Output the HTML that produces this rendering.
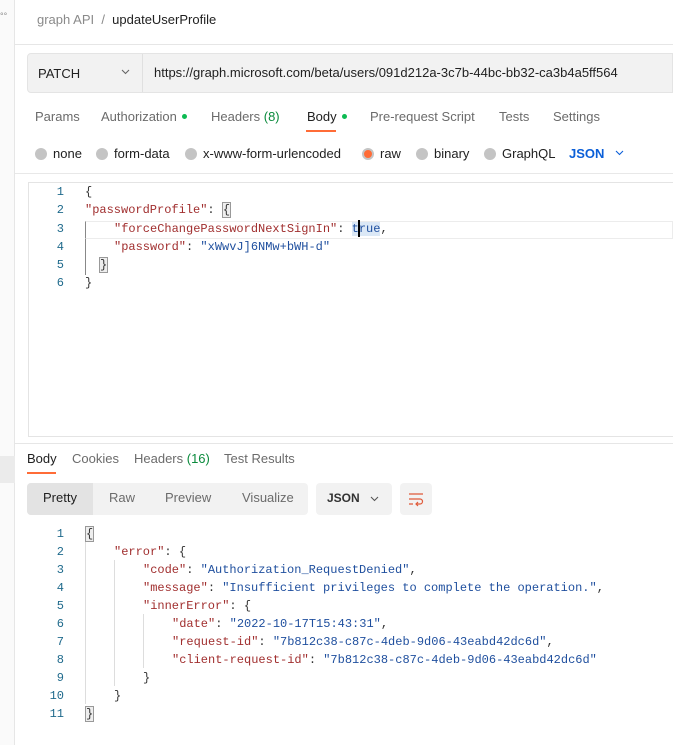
<!DOCTYPE html>
<html><head><meta charset="utf-8"><style>
*{margin:0;padding:0;box-sizing:border-box}
body{width:673px;height:745px;overflow:hidden;background:#fff;font-family:"Liberation Sans",Arial,sans-serif;font-size:13px;color:#6b6b6b;position:relative}
.a{position:absolute;white-space:nowrap}
.side{left:0;top:0;width:15px;height:745px;background:#fafafa;border-right:1px solid #e6e6e6}
.mono{font-family:"Liberation Mono",monospace;font-size:12px}
.ln{color:#1f6a8c;text-align:right;width:30px}
.k{color:#a12f2f}.s{color:#1f4f9e}.p{color:#333}
.dot{display:inline-block;width:5px;height:5px;border-radius:50%;background:#0cbb52;margin-left:5px;vertical-align:2px}
.rad{display:inline-block;width:12px;height:12px;border-radius:50%;background:#c4c4c4;margin-right:6px;vertical-align:-2px}
</style></head><body>
<div class="a side"></div>
<div class="a" style="left:0;top:456px;width:15px;height:27px;background:#ebebeb"></div>
<div class="a" style="left:0;top:11px;font-size:9px;color:#888">°°</div>
<div class="a" style="left:37px;top:12px;font-size:13px;color:#8a8a8a">graph API &nbsp;/&nbsp; <span style="color:#212121">updateUserProfile</span></div>
<div class="a" style="left:15px;top:44px;width:658px;height:1px;background:#e6e6e6"></div>
<div class="a" style="left:27px;top:53px;width:646px;height:40px;background:#f2f2f2;border:1px solid #e4e4e4;border-radius:4px 0 0 4px"></div>
<div class="a" style="left:142px;top:54px;width:1px;height:38px;background:#e0e0e0"></div>
<div class="a" style="left:38px;top:66px;color:#212121;font-size:13px">PATCH</div>
<svg class="a" style="left:121px;top:69px" width="9" height="6" viewBox="0 0 9 6" fill="none" stroke="#666" stroke-width="1.1"><path d="M1 1l3.5 3.5L8 1"/></svg>
<div class="a" style="left:154px;top:65px;color:#212121;font-size:13px">https://graph.microsoft.com/beta/users/091d212a-3c7b-44bc-bb32-ca3b4a5ff564</div>
<div class="a" style="left:35px;top:109px">Params</div>
<div class="a" style="left:101px;top:109px">Authorization<span class="dot"></span></div>
<div class="a" style="left:211px;top:109px">Headers <span style="color:#0a8a3c">(8)</span></div>
<div class="a" style="left:307px;top:109px;color:#212121">Body<span class="dot"></span></div>
<div class="a" style="left:306px;top:130px;width:30px;height:2px;background:#ff6c37"></div>
<div class="a" style="left:370px;top:109px">Pre-request Script</div>
<div class="a" style="left:499px;top:109px">Tests</div>
<div class="a" style="left:553px;top:109px">Settings</div>
<div class="a" style="left:35px;top:146px;color:#212121"><span class="rad"></span>none</div>
<div class="a" style="left:96px;top:146px;color:#212121"><span class="rad"></span>form-data</div>
<div class="a" style="left:185px;top:146px;color:#212121"><span class="rad"></span>x-www-form-urlencoded</div>
<div class="a" style="left:362px;top:146px;color:#212121"><span class="rad" style="background:#ff6c37;border:2px solid #c4c4c4"></span>raw</div>
<div class="a" style="left:416px;top:146px;color:#212121"><span class="rad"></span>binary</div>
<div class="a" style="left:484px;top:146px;color:#212121"><span class="rad"></span>GraphQL</div>
<div class="a" style="left:569px;top:146px;color:#0b5fd8;font-weight:bold">JSON</div>
<svg class="a" style="left:615px;top:150px" width="9" height="6" viewBox="0 0 9 6" fill="none" stroke="#0b5fd8" stroke-width="1.1"><path d="M1 1l3.5 3.5L8 1"/></svg>
<div class="a" style="left:15px;top:173px;width:658px;height:1px;background:#e8e8e8"></div>
<div class="a" style="left:28px;top:182px;width:650px;height:255px;border:1px solid #e4e4e4"></div>
<div class="a mono" style="left:34px;top:183px;line-height:18.3px">
<div><span class="a ln" style="left:0">1</span><span style="margin-left:51px" class="p">{</span></div>
<div><span class="a ln" style="left:0">2</span><span style="margin-left:51px" class="k">"passwordProfile"</span><span class="p">: <span style="border:1px solid #999;background:#eee">{</span></span></div>
<div><span class="a ln" style="left:0">3</span><span style="margin-left:80px" class="k">"forceChangePasswordNextSignIn"</span><span class="p">: </span><span class="s" style="background:#dbe8f6">true</span><span class="p">,</span></div>
<div><span class="a ln" style="left:0">4</span><span style="margin-left:80px" class="k">"password"</span><span class="p">: </span><span class="s">"xWwvJ]6NMw+bWH-d"</span></div>
<div><span class="a ln" style="left:0">5</span><span style="margin-left:65px;border:1px solid #999;background:#eee" class="p">}</span></div>
<div><span class="a ln" style="left:0">6</span><span style="margin-left:51px" class="p">}</span></div>
</div>
<div class="a" style="left:85px;top:221px;width:588px;height:18px;border:1px solid #ececec;border-left:1px solid #888"></div>
<div class="a" style="left:85px;top:239px;width:1px;height:36px;background:#888"></div>
<div class="a" style="left:358px;top:220px;width:2px;height:17px;background:#000"></div>
<div class="a" style="left:15px;top:443px;width:658px;height:1px;background:#e6e6e6"></div>
<div class="a" style="left:27px;top:451px;color:#212121">Body</div>
<div class="a" style="left:27px;top:472px;width:29px;height:2px;background:#ff6c37"></div>
<div class="a" style="left:72px;top:451px">Cookies</div>
<div class="a" style="left:134px;top:451px">Headers <span style="color:#0a8a3c">(16)</span></div>
<div class="a" style="left:224px;top:451px">Test Results</div>
<div class="a" style="left:27px;top:483px;width:281px;height:32px;background:#f2f2f2;border-radius:4px"></div>
<div class="a" style="left:27px;top:483px;width:66px;height:32px;background:#e3e3e3;border-radius:4px 0 0 4px"></div>
<div class="a" style="left:43px;top:490px;color:#212121">Pretty</div>
<div class="a" style="left:109px;top:490px">Raw</div>
<div class="a" style="left:165px;top:490px">Preview</div>
<div class="a" style="left:242px;top:490px">Visualize</div>
<div class="a" style="left:316px;top:483px;width:76px;height:32px;background:#f2f2f2;border-radius:4px"></div>
<div class="a" style="left:327px;top:491px;color:#333;font-size:12px;font-weight:bold">JSON</div>
<svg class="a" style="left:370px;top:496px" width="9" height="6" viewBox="0 0 9 6" fill="none" stroke="#555" stroke-width="1.1"><path d="M1 1l3.5 3.5L8 1"/></svg>
<div class="a" style="left:400px;top:483px;width:32px;height:32px;background:#f2f2f2;border-radius:4px"></div>
<svg class="a" style="left:407px;top:490px" width="18" height="18" viewBox="0 0 18 18" fill="none" stroke="#e05a3a" stroke-width="1.2"><path d="M2 4h14M2 9h11a2.5 2.5 0 0 1 0 5H9M11 12l-2 2 2 2M2 14h4"/></svg>
<div class="a mono" style="left:34px;top:525px;line-height:18px">
<div><span class="a ln" style="left:0">1</span><span style="margin-left:51px;border:1px solid #999;background:#eee" class="p">{</span></div>
<div><span class="a ln" style="left:0">2</span><span style="margin-left:80px" class="k">"error"</span><span class="p">: {</span></div>
<div><span class="a ln" style="left:0">3</span><span style="margin-left:109px" class="k">"code"</span><span class="p">: </span><span class="s">"Authorization_RequestDenied"</span><span class="p">,</span></div>
<div><span class="a ln" style="left:0">4</span><span style="margin-left:109px" class="k">"message"</span><span class="p">: </span><span class="s">"Insufficient privileges to complete the operation."</span><span class="p">,</span></div>
<div><span class="a ln" style="left:0">5</span><span style="margin-left:109px" class="k">"innerError"</span><span class="p">: {</span></div>
<div><span class="a ln" style="left:0">6</span><span style="margin-left:138px" class="k">"date"</span><span class="p">: </span><span class="s">"2022-10-17T15:43:31"</span><span class="p">,</span></div>
<div><span class="a ln" style="left:0">7</span><span style="margin-left:138px" class="k">"request-id"</span><span class="p">: </span><span class="s">"7b812c38-c87c-4deb-9d06-43eabd42dc6d"</span><span class="p">,</span></div>
<div><span class="a ln" style="left:0">8</span><span style="margin-left:138px" class="k">"client-request-id"</span><span class="p">: </span><span class="s">"7b812c38-c87c-4deb-9d06-43eabd42dc6d"</span></div>
<div><span class="a ln" style="left:0">9</span><span style="margin-left:109px" class="p">}</span></div>
<div><span class="a ln" style="left:0">10</span><span style="margin-left:80px" class="p">}</span></div>
<div><span class="a ln" style="left:0">11</span><span style="margin-left:51px;border:1px solid #999;background:#eee" class="p">}</span></div>
</div>
<div class="a" style="left:85px;top:542px;width:1px;height:162px;background:#ddd"></div>
<div class="a" style="left:114px;top:560px;width:1px;height:126px;background:#ddd"></div>
<div class="a" style="left:143px;top:614px;width:1px;height:54px;background:#ddd"></div>
</body></html>
